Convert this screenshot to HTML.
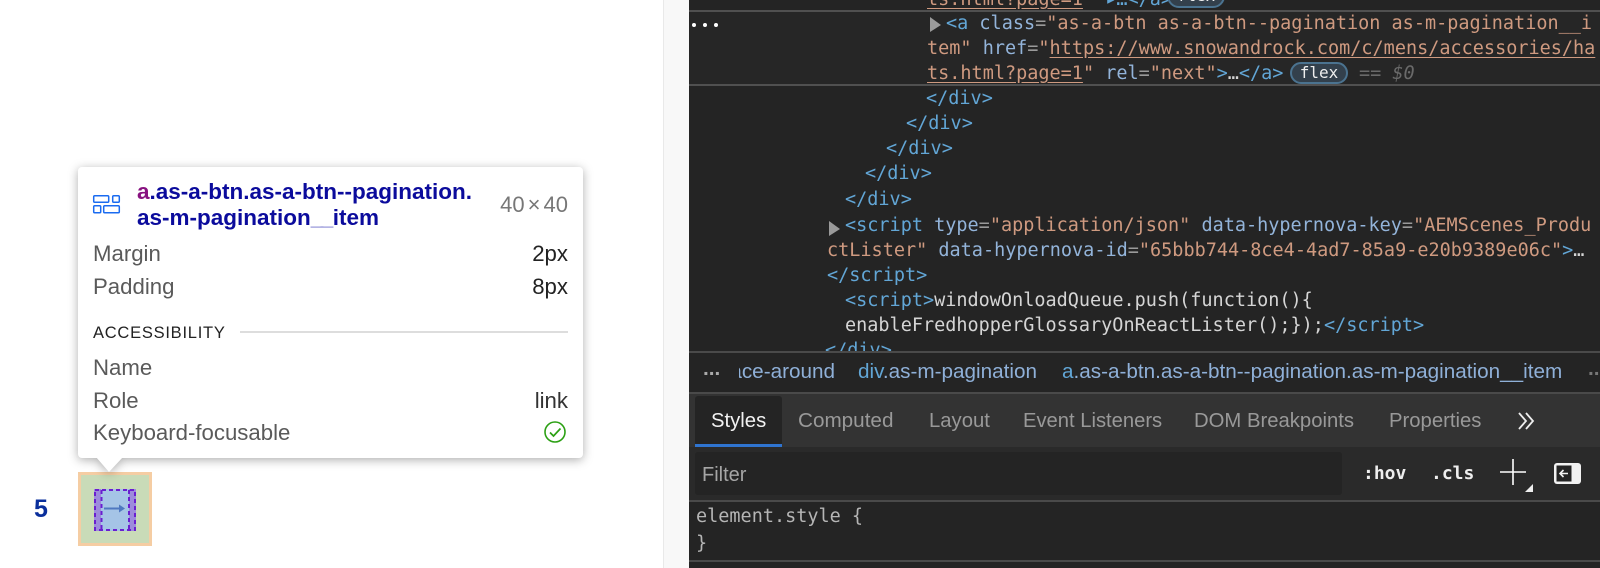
<!DOCTYPE html>
<html><head><meta charset="utf-8">
<style>
html,body{margin:0;padding:0;background:#fff}
body{width:1600px;height:568px;overflow:hidden;position:relative;font-family:"Liberation Sans",sans-serif}
.a{position:absolute;white-space:pre}
.m{position:absolute;white-space:pre;font-family:"DejaVu Sans Mono","Liberation Mono",monospace;font-size:18.5px;line-height:25px;color:#d5d5d5}
.t{color:#62a6d6}.n{color:#93b4da}.v{color:#cf9a80}.e{color:#9a9a9a}.u{color:#cf9a80;text-decoration:underline;text-underline-offset:3px}
.s{position:absolute;white-space:pre;font-size:22.2px;line-height:26px;color:#5a5a5a}
.tab{position:absolute;white-space:pre;font-size:20.3px;line-height:26px;top:408px;color:#999}
.crumb{position:absolute;white-space:pre;font-size:20.7px;line-height:26px;top:359px;color:#8fb0d8}
</style></head><body>
<div class="a" style="left:663px;top:0;width:26px;height:568px;background:#f8f8f8;border-left:1px solid #e9e9e9;box-sizing:border-box"></div>
<div class="a" style="left:689px;top:0;width:911px;height:568px;background:#242424"></div>

<div class="a" style="left:688px;top:0;width:912px;height:351px;overflow:hidden">
  <div class="a" style="left:1px;top:10px;width:911px;height:76px;border-top:2px solid #505050;border-bottom:2px solid #505050;box-sizing:border-box;background:#262626"></div>
  <div class="a" style="left:4px;top:23px;width:4px;height:4px;background:#fff;border-radius:50%;box-shadow:11px 0 0 #fff,22px 0 0 #fff"></div>
  <div class="a" style="left:0;top:1px;width:912px;height:350px">
  <div class="m" style="left:239px;top:-14px"><span class="u">ts.html?page=1</span><span class="v">"</span> <span class="t">▸…&lt;/a&gt;</span></div>
  <div class="a" style="left:479px;top:-17px;width:54px;height:20px;border:2px solid #4b7390;border-radius:12px;background:#33404c;color:#eee;font:16px/20px 'DejaVu Sans Mono',monospace;text-align:center">flex</div>
  <svg class="a" style="left:242px;top:16px" width="12" height="16"><path d="M0 0L11 8L0 15Z" fill="#9a9a9a"/></svg>
  <div class="m" style="left:258px;top:10px"><span class="t">&lt;a</span> <span class="n">class</span><span class="e">=</span><span class="v">"as-a-btn as-a-btn--pagination as-m-pagination__i</span></div>
  <div class="m" style="left:239px;top:35px"><span class="v">tem"</span> <span class="n">href</span><span class="e">=</span><span class="v">"</span><span class="u">https://www.snowandrock.com/c/mens/accessories/ha</span></div>
  <div class="m" style="left:239px;top:60px"><span class="u">ts.html?page=1</span><span class="v">"</span> <span class="n">rel</span><span class="e">=</span><span class="v">"next"</span><span class="t">&gt;</span>…<span class="t">&lt;/a&gt;</span></div>
  <div class="a" style="left:602px;top:61px;width:54px;height:18px;border:2px solid #4b7390;border-radius:12px;background:#33404c;color:#eee;font:16px/18px 'DejaVu Sans Mono',monospace;text-align:center">flex</div>
  <div class="m" style="left:671px;top:60px;color:#6a6a6a">== <i>$0</i></div>
  <div class="m t" style="left:238px;top:85px;color:#62a6d6">&lt;/div&gt;</div>
  <div class="m t" style="left:218px;top:110px;color:#62a6d6">&lt;/div&gt;</div>
  <div class="m t" style="left:198px;top:135px;color:#62a6d6">&lt;/div&gt;</div>
  <div class="m t" style="left:177px;top:160px;color:#62a6d6">&lt;/div&gt;</div>
  <div class="m t" style="left:157px;top:186px;color:#62a6d6">&lt;/div&gt;</div>
  <svg class="a" style="left:141px;top:220px" width="12" height="16"><path d="M0 0L11 8L0 15Z" fill="#9a9a9a"/></svg>
  <div class="m" style="left:157px;top:212px"><span class="t">&lt;script</span> <span class="n">type</span><span class="e">=</span><span class="v">"application/json"</span> <span class="n">data-hypernova-key</span><span class="e">=</span><span class="v">"AEMScenes_Produ</span></div>
  <div class="m" style="left:139px;top:237px"><span class="v">ctLister"</span> <span class="n">data-hypernova-id</span><span class="e">=</span><span class="v">"65bbb744-8ce4-4ad7-85a9-e20b9389e06c"</span><span class="t">&gt;</span>…</div>
  <div class="m" style="left:139px;top:262px;color:#62a6d6">&lt;/script&gt;</div>
  <div class="m" style="left:157px;top:287px"><span class="t">&lt;script&gt;</span>windowOnloadQueue.push(function(){</div>
  <div class="m" style="left:157px;top:312px">enableFredhopperGlossaryOnReactLister();});<span class="t">&lt;/script&gt;</span></div>
  <div class="m" style="left:137px;top:337px;color:#62a6d6">&lt;/div&gt;</div>
  </div>
</div>

<div class="a" style="left:689px;top:351px;width:911px;height:2px;background:#4a4a4a"></div>
<div class="a" style="left:689px;top:353px;width:911px;height:39px;background:#242424"></div>
<div class="crumb" style="left:703px;top:356px;color:#aaa;font-weight:bold">...</div>
<div class="a" style="left:739px;top:353px;width:96px;height:39px;overflow:hidden"><div class="crumb" style="right:0;top:6px">space-around</div></div>
<div class="crumb" style="left:858px"><span style="color:#62a6d6">div</span>.as-m-pagination</div>
<div class="crumb" style="left:1062px"><span style="color:#62a6d6">a</span>.as-a-btn.as-a-btn--pagination.as-m-pagination__item</div>
<div class="crumb" style="left:1588px;top:356px;color:#777;font-weight:bold">..</div>

<div class="a" style="left:689px;top:392px;width:911px;height:55px;background:#333;border-top:2px solid #4a4a4a;box-sizing:border-box"></div>
<div class="a" style="left:695px;top:396px;width:87px;height:51px;background:#242424;border-radius:3px 3px 0 0;border-bottom:3px solid #2f74d0;box-sizing:border-box"></div>
<div class="tab" style="left:711px;color:#f2f2f2">Styles</div>
<div class="tab" style="left:798px;font-size:20.7px">Computed</div>
<div class="tab" style="left:929px">Layout</div>
<div class="tab" style="left:1023px;font-size:20.2px">Event Listeners</div>
<div class="tab" style="left:1194px">DOM Breakpoints</div>
<div class="tab" style="left:1389px">Properties</div>
<svg class="a" style="left:1516px;top:411px" width="22" height="20"><path d="M3 2L10 10L3 18M10 2L17 10L10 18" fill="none" stroke="#eee" stroke-width="1.8"/></svg>

<div class="a" style="left:689px;top:447px;width:911px;height:53px;background:#2a2a2a"></div>
<div class="a" style="left:695px;top:452px;width:647px;height:43px;background:#242424;border-radius:3px"></div>
<div class="a" style="left:702px;top:462px;font-size:20px;line-height:26px;color:#a5a5a5">Filter</div>
<div class="m" style="left:1363px;top:461px;font-weight:bold;font-size:18px;color:#eee">:hov</div>
<div class="m" style="left:1431px;top:461px;font-weight:bold;font-size:18px;color:#eee">.cls</div>
<svg class="a" style="left:1500px;top:458px" width="36" height="36"><path d="M0 21H26M13 8V34" stroke="#fff" stroke-width="1.6" fill="none" transform="translate(0,-7)"/><path d="M25 34H33V26Z" fill="#eee"/></svg>
<svg class="a" style="left:1553px;top:462px" width="30" height="24"><rect x="1" y="1" width="27" height="21" rx="3" fill="#f2f2f2"/><rect x="3.5" y="3.5" width="15" height="16" fill="#242424"/><path d="M15 11.5H7M10.5 8L7 11.5L10.5 15" stroke="#f2f2f2" stroke-width="1.6" fill="none"/></svg>
<div class="a" style="left:689px;top:500px;width:911px;height:2px;background:#4a4a4a"></div>
<div class="m" style="left:696px;top:504px;color:#b5b5b5">element.style {</div>
<div class="m" style="left:696px;top:531px;color:#b5b5b5">}</div>
<div class="a" style="left:689px;top:560px;width:911px;height:2px;background:#4a4a4a"></div>

<div class="a" style="left:34px;top:495px;font-size:25px;line-height:28px;font-weight:bold;color:#0a2f9c">5</div>
<div class="a" style="left:78px;top:472px;width:74px;height:74px;box-sizing:border-box;border:3px solid #f5cda3;background:#c9dbb8"></div>
<div class="a" style="left:94px;top:489px;width:42px;height:42px;background:#a5c4e6"></div>
<div class="a" style="left:94px;top:489px;width:7px;height:42px;background:#9d8bdc"></div>
<div class="a" style="left:129px;top:489px;width:7px;height:42px;background:#9d8bdc"></div>
<svg class="a" style="left:94px;top:489px" width="42" height="42"><g fill="none" stroke="#6a1fd0" stroke-width="2" stroke-dasharray="4 3"><rect x="1" y="1" width="40" height="40"/><path d="M7.5 1V41M35 1V41"/></g><path d="M10 19.5H27" stroke="#4f78c0" stroke-width="2" fill="none"/><path d="M25 15.5L31 19.5L25 23.5Z" fill="#4f78c0"/></svg>

<div class="a" style="left:78px;top:167px;width:505px;height:305px;filter:drop-shadow(0 2px 5px rgba(0,0,0,.32))">
  <div class="a" style="left:0;top:0;width:505px;height:291px;background:#fff;border-radius:4px"></div>
  <svg class="a" style="left:18px;top:290px" width="28" height="15"><path d="M0 0L13 15L27 0Z" fill="#fff"/></svg>
</div>
<svg class="a" style="left:92px;top:194px" width="29" height="21"><g fill="none" stroke="#1a6bf0" stroke-width="1.5"><rect x="1.7" y="1.7" width="15" height="6.6" rx="1"/><rect x="20.7" y="1.7" width="6.6" height="6.6" rx="1"/><rect x="1.7" y="11.7" width="7" height="7" rx="1"/><rect x="11.7" y="11.7" width="15.6" height="7" rx="1"/></g></svg>
<div class="a" style="left:137px;top:178px;font-size:22.5px;line-height:27px;font-weight:bold;color:#0b0b9c"><span style="color:#881280">a</span>.as-a-btn.as-a-btn--pagination.</div>
<div class="a" style="left:137px;top:204px;font-size:22.5px;line-height:27px;font-weight:bold;color:#0b0b9c">as-m-pagination<span style="letter-spacing:-2.5px;color:#6a6ac8">__</span><span style="margin-left:2px">item</span></div>
<div class="a" style="right:1032px;top:192px;font-size:22px;line-height:26px;color:#777">40<span style="margin:0 3px">×</span>40</div>
<div class="s" style="left:93px;top:241px">Margin</div>
<div class="s" style="right:1032px;top:241px;color:#222">2px</div>
<div class="s" style="left:93px;top:274px">Padding</div>
<div class="s" style="right:1032px;top:274px;color:#222">8px</div>
<div class="a" style="left:93px;top:324px;font-size:16.5px;line-height:18px;letter-spacing:.75px;color:#222">ACCESSIBILITY</div>
<div class="a" style="left:240px;top:331px;width:328px;height:2px;background:#ddd"></div>
<div class="s" style="left:93px;top:355px">Name</div>
<div class="s" style="left:93px;top:388px">Role</div>
<div class="s" style="right:1032px;top:388px;color:#333">link</div>
<div class="s" style="left:93px;top:420px">Keyboard-focusable</div>
<svg class="a" style="left:543px;top:420px" width="24" height="24"><circle cx="12" cy="12" r="10" fill="none" stroke="#2ca014" stroke-width="1.6"/><path d="M7 12.5L10.5 16L17.5 8.5" fill="none" stroke="#2ca014" stroke-width="1.7"/></svg>
</body></html>
